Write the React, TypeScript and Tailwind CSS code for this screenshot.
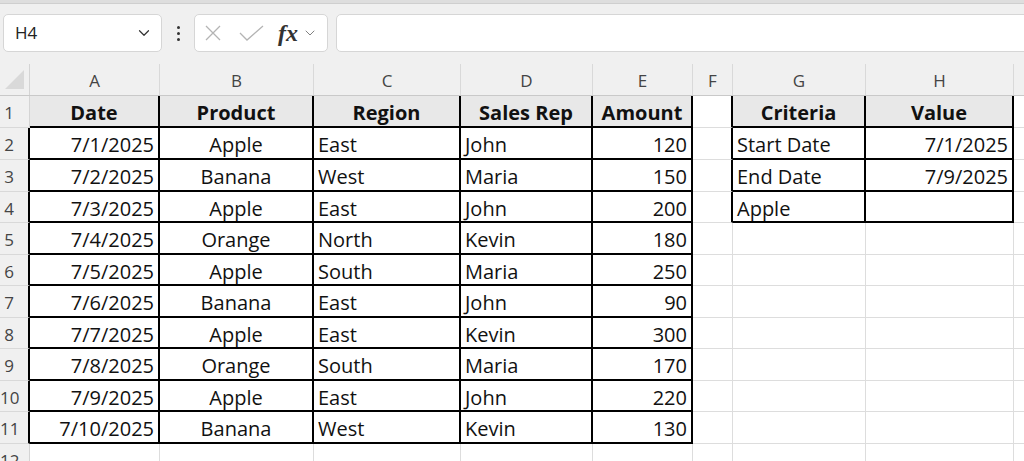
import { ChevronDown } from "lucide-react";

type Align = "left" | "center" | "right";

const alignClass: Record<Align, string> = {
  left: "justify-start pl-[4px]",
  center: "justify-center",
  right: "justify-end pr-[4px]",
};

const colWidth = [
  "w-[130px]",
  "w-[154px]",
  "w-[147px]",
  "w-[132px]",
  "w-[100px]",
  "w-[40px]",
  "w-[133px]",
  "w-[148px]",
];

const colAlign: Align[] = ["right", "center", "left", "left", "right", "left", "left", "right"];

const letters = ["A", "B", "C", "D", "E", "F", "G", "H"];

const data = [
  ["7/1/2025", "Apple", "East", "John", "120"],
  ["7/2/2025", "Banana", "West", "Maria", "150"],
  ["7/3/2025", "Apple", "East", "John", "200"],
  ["7/4/2025", "Orange", "North", "Kevin", "180"],
  ["7/5/2025", "Apple", "South", "Maria", "250"],
  ["7/6/2025", "Banana", "East", "John", "90"],
  ["7/7/2025", "Apple", "East", "Kevin", "300"],
  ["7/8/2025", "Orange", "South", "Maria", "170"],
  ["7/9/2025", "Apple", "East", "John", "220"],
  ["7/10/2025", "Banana", "West", "Kevin", "130"],
];

const criteria = [
  ["Start Date", "7/1/2025"],
  ["End Date", "7/9/2025"],
  ["Apple", ""],
];

// row tops 96,128,160,192,223,255,286,318,349,381,412,444
const heights = [
  "h-[32px]",
  "h-[32px]",
  "h-[32px]",
  "h-[31px]",
  "h-[32px]",
  "h-[31px]",
  "h-[32px]",
  "h-[31px]",
  "h-[32px]",
  "h-[31px]",
  "h-[32px]",
  "h-[32px]",
];

function rowCells(r: number): string[] {
  const cells = ["", "", "", "", "", "", "", ""];
  if (r === 1) {
    ["Date", "Product", "Region", "Sales Rep", "Amount"].forEach((t, i) => (cells[i] = t));
    cells[6] = "Criteria";
    cells[7] = "Value";
  } else if (r <= 11) {
    data[r - 2].forEach((t, i) => (cells[i] = t));
    if (r <= 4) {
      cells[6] = criteria[r - 2][0];
      cells[7] = criteria[r - 2][1];
    }
  }
  return cells;
}

function inTable(r: number, c: number) {
  if (c <= 4) return r >= 1 && r <= 11;
  if (c === 6 || c === 7) return r >= 1 && r <= 4;
  return false;
}

function SheetRow({ r }: { r: number }) {
  const cells = rowCells(r);
  return (
    <div className={`flex ${heights[r - 1]}`}>
      <div
        className={`w-[30px] shrink-0 bg-[#f0f0f0] border-b border-b-[#d9d9d9] flex items-center pt-[3px] text-[17px] text-[#444] ${
          r >= 2 && r <= 11 ? "border-r-2 border-r-black" : "border-r border-r-[#d4d4d4]"
        }`}
      >
        <span className="w-[18px] text-center">{r}</span>
      </div>
      {cells.map((text, c) => {
        const table = inTable(r, c);
        const header = table && r === 1;
        const rightBlack = table || (c === 5 && r >= 1 && r <= 4);
        return (
          <div
            key={c}
            className={`${colWidth[c]} shrink-0 flex items-center pt-[4px] overflow-hidden whitespace-nowrap text-[20px] text-[#111] ${
              header ? "bg-[#e8e8e8] font-bold justify-center" : alignClass[colAlign[c]]
            } ${rightBlack ? "border-r-2 border-r-black" : "border-r border-r-[#dddddd]"} ${
              table ? "border-b-2 border-b-black" : "border-b border-b-[#dddddd]"
            }`}
          >
            {text}
          </div>
        );
      })}
      <div className="flex-1 border-b border-b-[#dddddd]" />
    </div>
  );
}

export default function App() {
  return (
    <div className="w-[1024px] h-[461px] overflow-hidden bg-white font-['Open_Sans','Liberation_Sans',sans-serif]">
      <div className="h-[4px] bg-[#dedede] border-b border-b-[#cfcfcf]" />
      <div className="h-[60px] bg-[#f0f0f0] flex items-start pt-[10px] pl-[3px] gap-[8px]">
        <div className="w-[159px] h-[38px] bg-white border border-[#d6d6d6] rounded-[5px] flex items-center justify-between pl-[11px] pr-[8px]">
          <span className="text-[17px] text-[#222]">H4</span>
          <ChevronDown size={18} strokeWidth={1.6} className="text-[#333]" />
        </div>
        <div className="w-[16px] h-[38px] flex flex-col items-center justify-center gap-[3px]">
          <span className="w-[3px] h-[3px] rounded-full bg-[#333]" />
          <span className="w-[3px] h-[3px] rounded-full bg-[#333]" />
          <span className="w-[3px] h-[3px] rounded-full bg-[#333]" />
        </div>
        <div className="w-[134px] h-[38px] bg-white border border-[#d6d6d6] rounded-[5px] flex items-center pl-[9px]">
          <svg width="18" height="18" viewBox="0 0 18 18" className="mr-[17px]">
            <path d="M2 2 L16 16 M16 2 L2 16" stroke="#b4b4b4" strokeWidth="1.3" fill="none" />
          </svg>
          <svg width="25" height="18" viewBox="0 0 25 18" className="mr-[14px]">
            <path d="M1 9 L8 16 L24 2" stroke="#b4b4b4" strokeWidth="1.3" fill="none" />
          </svg>
          <span className="font-['Liberation_Serif',serif] italic font-semibold text-[24px] text-[#333] leading-none mr-[4px]">
            fx
          </span>
          <ChevronDown size={16} strokeWidth={1.4} className="text-[#777]" />
        </div>
        <div className="flex-1 h-[38px] bg-white border border-[#d6d6d6] rounded-[5px] mr-[-10px]" />
      </div>
      <div className="flex h-[32px] bg-[#f0f0f0] border-b border-b-[#c9c9c9]">
        <div className="w-[30px] shrink-0 relative border-r border-r-[#d4d4d4]">
          <svg width="20" height="20" viewBox="0 0 20 20" className="absolute left-[5px] top-[6px]">
            <path d="M19 0 L19 19 L0 19 Z" fill="#d9d9d9" />
          </svg>
        </div>
        {letters.map((l, c) => (
          <div
            key={l}
            className={`${colWidth[c]} shrink-0 flex items-center justify-center pt-[2px] text-[17px] text-[#444] border-r border-r-[#d9d9d9]`}
          >
            {l}
          </div>
        ))}
        <div className="flex-1" />
      </div>
      {Array.from({ length: 12 }, (_, i) => (
        <SheetRow key={i} r={i + 1} />
      ))}
    </div>
  );
}
